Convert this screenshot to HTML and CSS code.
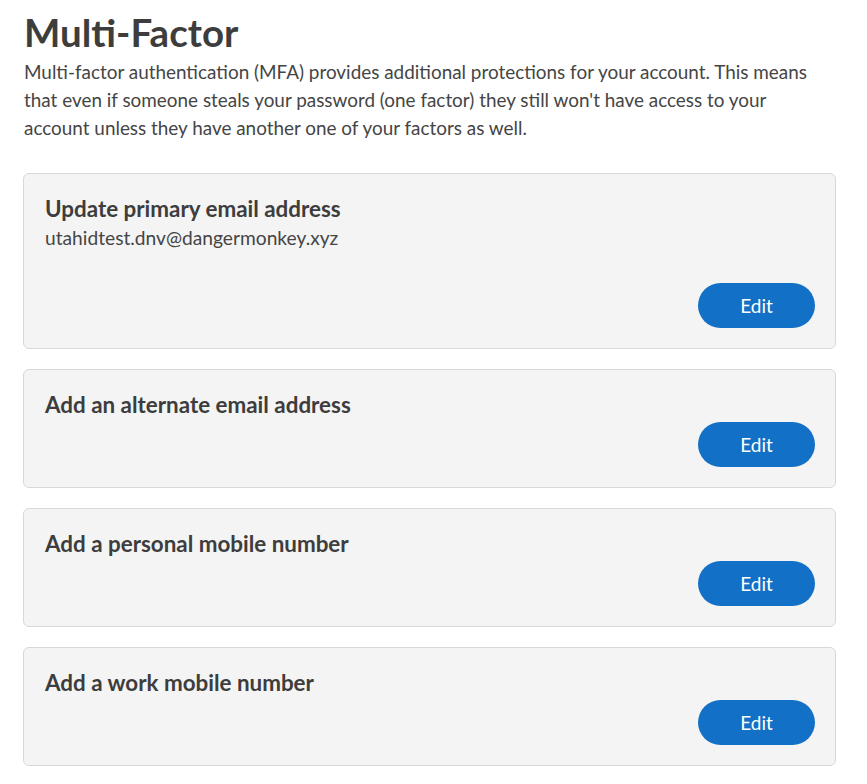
FILE: index.html
```html
<!DOCTYPE html>
<html lang="en">
<head>
<meta charset="UTF-8" />
<meta name="viewport" content="width=device-width, initial-scale=1" />
<title>Multi-Factor</title>
<link rel="stylesheet" href="styles.css">
</head>
<body>

<main class="mfa">
  <h1>Multi-Factor</h1>
  <p class="intro">Multi-factor authentication (MFA) provides additional protections for your account. This means that even if someone steals your password (one factor) they still won't have access to your account unless they have another one of your factors as well.</p>

  <section class="factor factor-primary">
    <h2>Update primary email address</h2>
    <div class="factor-value">utahidtest.dnv@dangermonkey.xyz</div>
    <div class="factor-actions"><button class="btn-edit">Edit</button></div>
  </section>

  <section class="factor">
    <h2>Add an alternate email address</h2>
    <div class="factor-actions"><button class="btn-edit">Edit</button></div>
  </section>

  <section class="factor">
    <h2>Add a personal mobile number</h2>
    <div class="factor-actions"><button class="btn-edit">Edit</button></div>
  </section>

  <section class="factor">
    <h2>Add a work mobile number</h2>
    <div class="factor-actions"><button class="btn-edit">Edit</button></div>
  </section>
</main>

</body>
</html>
```

FILE: styles.css
```css
body {
  margin: 0;
  padding: 0 31px 0 23px;
  font-family: Lato, "Liberation Sans", sans-serif;
  background: #fff;
  color: #454545;
}
h1 {
  margin: 8px 0 2px 1px;
  font-size: 38.5px;
  line-height: 48px;
  font-weight: 700;
  color: #3d3d3d;
}
.intro {
  margin: 1px 0 31px 1px;
  font-size: 18.9px;
  line-height: 28px;
}
.factor {
  background: #f4f4f4;
  border: 1px solid #d8d8d8;
  border-radius: 6px;
  padding: 21px 20px 20px 21px;
  margin-bottom: 20px;
}
.factor h2 {
  margin: 0;
  font-size: 22.4px;
  line-height: 27px;
  font-weight: 700;
  color: #3d3d3d;
}
.factor-value {
  margin-top: 4px;
  font-size: 19.2px;
  line-height: 24px;
}
.factor-actions {
  display: flex;
  justify-content: flex-end;
  margin-top: 4px;
}
.factor-primary .factor-actions {
  margin-top: 33px;
}
.btn-edit {
  width: 117px;
  height: 45px;
  border: none;
  border-radius: 23px;
  background: #1270c6;
  color: #fff;
  font-family: inherit;
  font-size: 19px;
  cursor: pointer;
}
.btn-edit:hover {
  background: #0d5ca6;
}
```
